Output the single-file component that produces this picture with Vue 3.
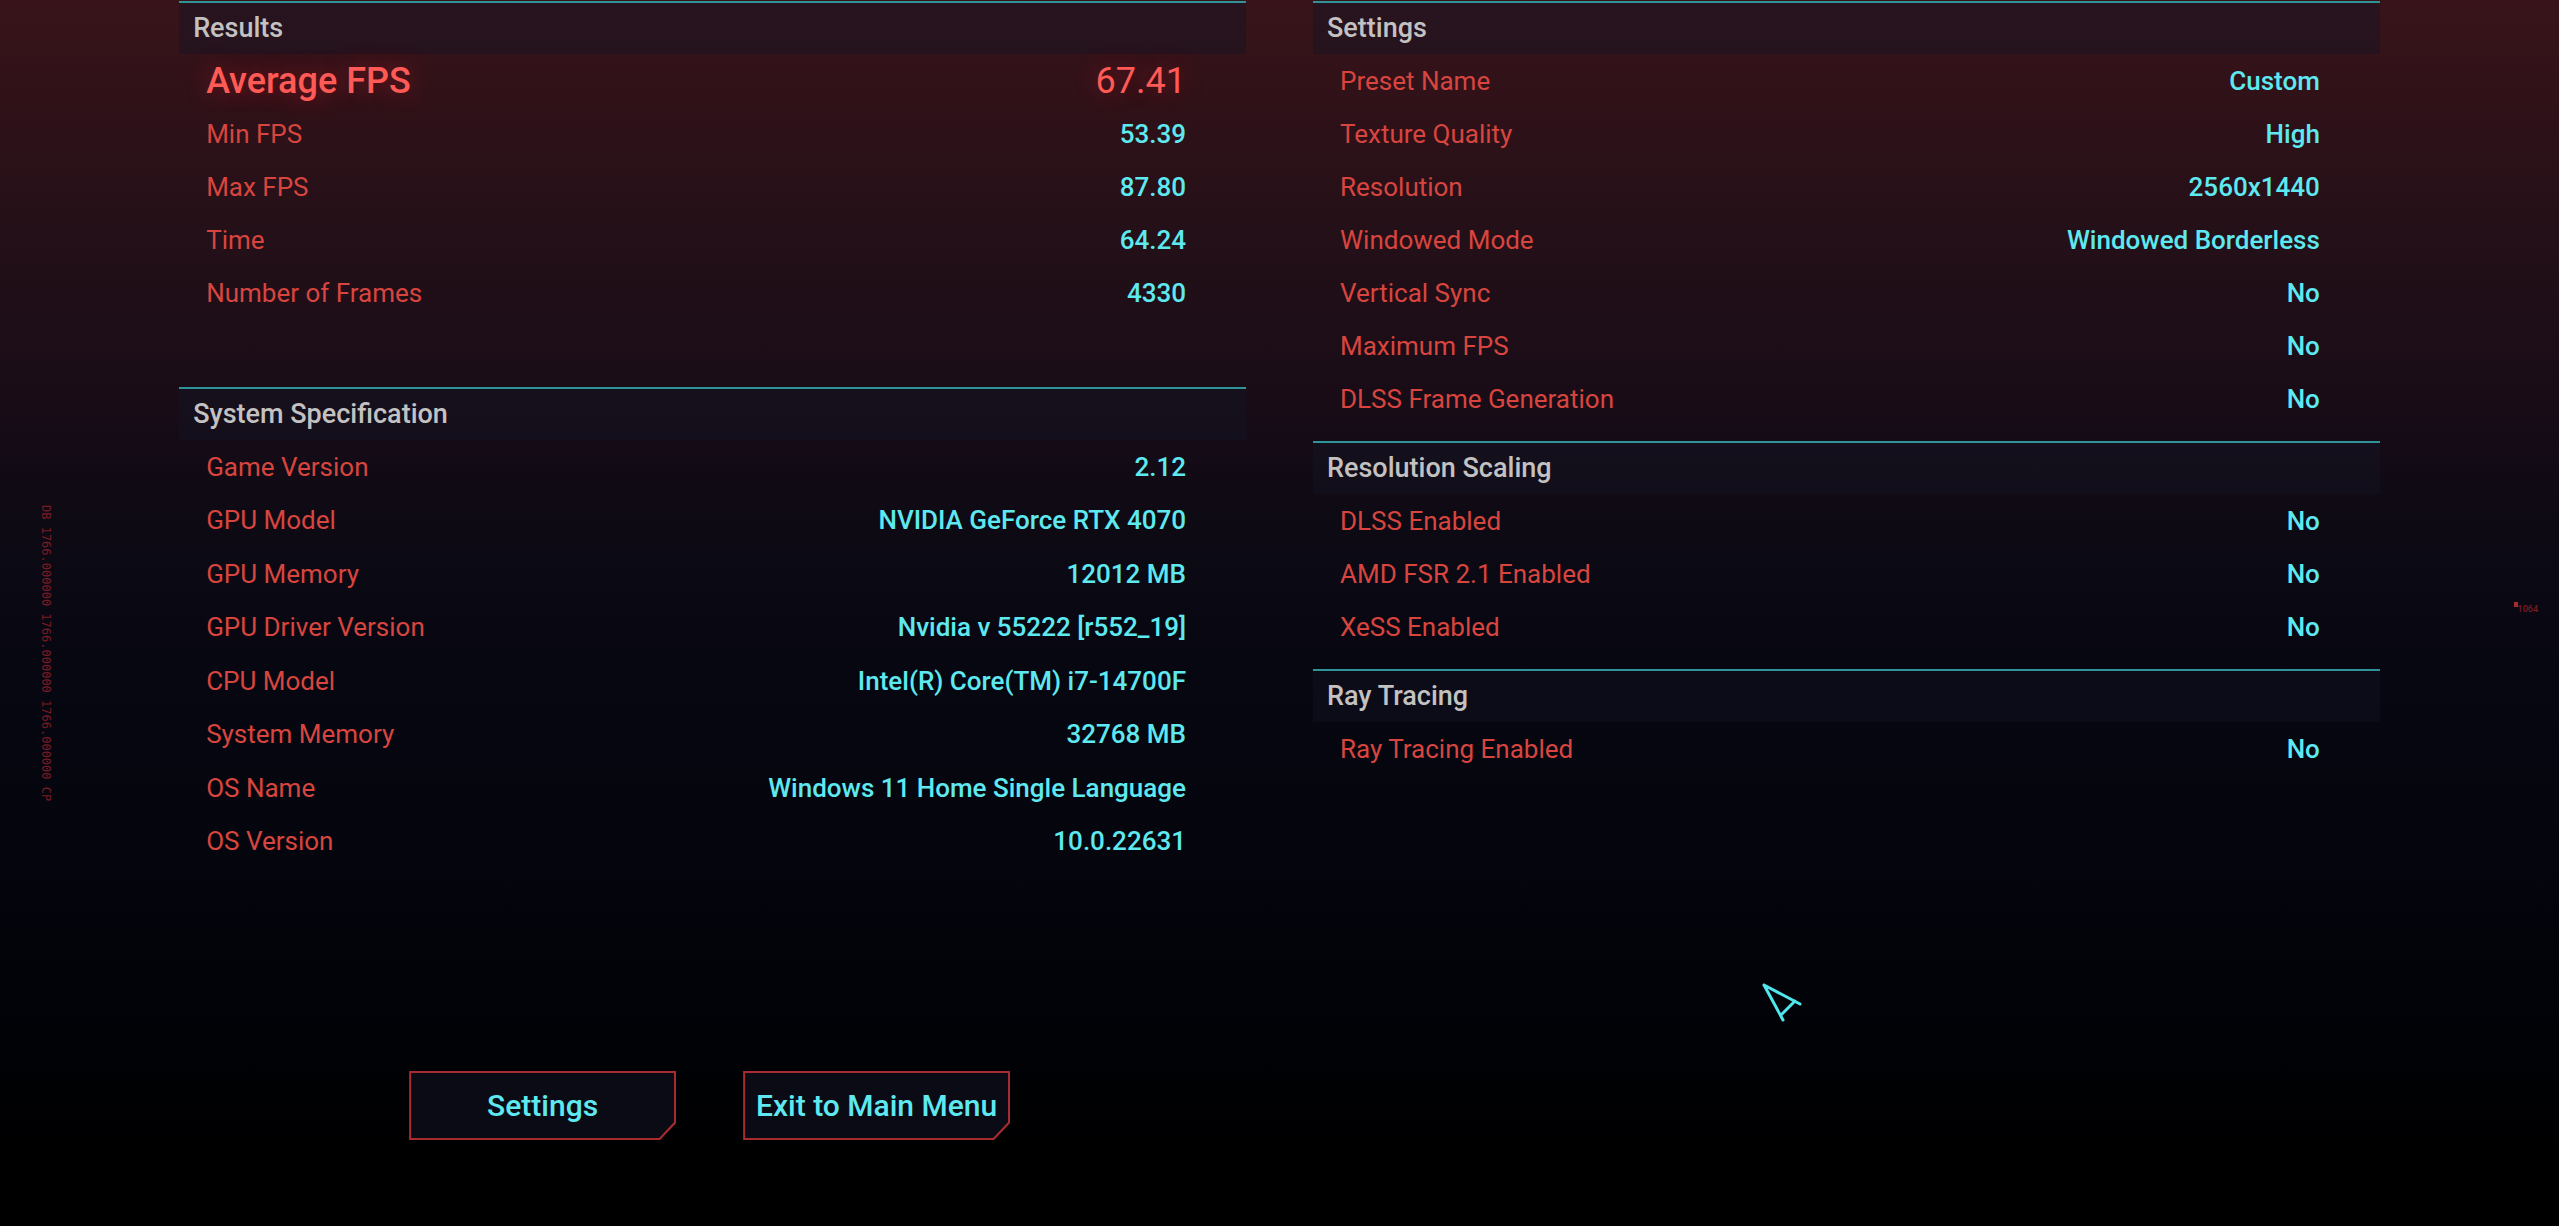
<script setup>
const columns = [
  {
    id: 'benchmark',
    sections: [
      {
        title: 'Results',
        kind: 'results',
        rows: [
          { label: 'Average FPS', value: '67.41', highlight: true },
          { label: 'Min FPS', value: '53.39' },
          { label: 'Max FPS', value: '87.80' },
          { label: 'Time', value: '64.24' },
          { label: 'Number of Frames', value: '4330' },
        ],
      },
      {
        title: 'System Specification',
        kind: 'system',
        rows: [
          { label: 'Game Version', value: '2.12' },
          { label: 'GPU Model', value: 'NVIDIA GeForce RTX 4070' },
          { label: 'GPU Memory', value: '12012 MB' },
          { label: 'GPU Driver Version', value: 'Nvidia v 55222 [r552_19]' },
          { label: 'CPU Model', value: 'Intel(R) Core(TM) i7-14700F' },
          { label: 'System Memory', value: '32768 MB' },
          { label: 'OS Name', value: 'Windows 11 Home Single Language' },
          { label: 'OS Version', value: '10.0.22631' },
        ],
      },
    ],
    actions: ['Settings', 'Exit to Main Menu'],
  },
  {
    id: 'options',
    sections: [
      {
        title: 'Settings',
        kind: 'settings',
        rows: [
          { label: 'Preset Name', value: 'Custom' },
          { label: 'Texture Quality', value: 'High' },
          { label: 'Resolution', value: '2560x1440' },
          { label: 'Windowed Mode', value: 'Windowed Borderless' },
          { label: 'Vertical Sync', value: 'No' },
          { label: 'Maximum FPS', value: 'No' },
          { label: 'DLSS Frame Generation', value: 'No' },
        ],
      },
      {
        title: 'Resolution Scaling',
        kind: 'scaling',
        rows: [
          { label: 'DLSS Enabled', value: 'No' },
          { label: 'AMD FSR 2.1 Enabled', value: 'No' },
          { label: 'XeSS Enabled', value: 'No' },
        ],
      },
      {
        title: 'Ray Tracing',
        kind: 'tracing',
        rows: [{ label: 'Ray Tracing Enabled', value: 'No' }],
      },
    ],
    actions: [],
  },
]
</script>

<template>
  <main class="screen">
    <div v-for="column in columns" :key="column.id" class="column">
      <section
        v-for="section in column.sections"
        :key="section.title"
        class="section"
        :class="section.kind"
      >
        <h2 :id="section.kind" class="title">{{ section.title }}</h2>
        <table class="stats" :aria-labelledby="section.kind">
          <tbody>
            <tr v-for="row in section.rows" :key="row.label" :class="{ highlight: row.highlight }">
              <th scope="row">{{ row.label }}</th>
              <td>{{ row.value }}</td>
            </tr>
          </tbody>
        </table>
      </section>
      <div v-if="column.actions.length" class="actions">
        <button v-for="action in column.actions" :key="action" type="button" class="action">
          <span>{{ action }}</span>
        </button>
      </div>
    </div>

    <span class="readout">DB 1766.000000 1766.000000 1766.000000 CP</span>
    <span class="marker"><i></i>1064</span>
    <svg class="pointer" viewBox="0 0 44 44" aria-hidden="true">
      <path d="M3 4 39 23M3 4 22 39M34 20 21 33" />
    </svg>
  </main>
</template>

<style>
body {
  margin: 0;
  background: #000;
}
</style>

<style scoped>
.screen {
  position: relative;
  box-sizing: border-box;
  min-height: 100vh;
  padding: 1px 7% 0;
  display: flex;
  gap: 67px;
  overflow: hidden;
  background: linear-gradient(
    #38141a 0%,
    #2e1118 10%,
    #241018 19%,
    #190c17 32%,
    #0d0a14 43%,
    #070711 55%,
    #04050d 70%,
    #010206 85%,
    #000 95%
  );
  color: #5ee9f0;
  font-family: Roboto, "Liberation Sans", sans-serif;
  font-size: 26px;
  font-weight: 500;
}

.column {
  flex: 1;
  min-width: 0;
}

.section {
  margin-bottom: 16px;
}

.results {
  margin-bottom: 68px;
}

.title {
  box-sizing: border-box;
  height: 53px;
  margin: 0;
  padding-left: 14px;
  border-top: 2px solid #2f9498;
  background: rgba(20, 20, 36, 0.45);
  color: #c4c1c1;
  font-size: 27px;
  font-weight: 500;
  line-height: 51px;
}

.stats {
  width: 100%;
  border-collapse: collapse;
}

.system .stats {
  height: 428px;
}

.stats th,
.stats td {
  height: 53px;
  padding: 0;
  line-height: 32px;
  white-space: nowrap;
}

.stats th {
  padding-left: 27px;
  color: #d8453f;
  font-weight: 400;
  text-align: left;
}

.stats td {
  padding-right: 60px;
  text-align: right;
}

.highlight th,
.highlight td {
  color: #ff5a55;
  font-size: 36px;
  text-shadow: 0 0 24px rgba(255, 30, 40, 0.4);
}

.highlight th {
  font-weight: 500;
}

.highlight td {
  font-weight: 400;
}

.actions {
  display: flex;
  gap: 67px;
  margin: 203px 0 0 230px;
}

.action {
  position: relative;
  width: 267px;
  height: 69px;
  padding: 0;
  border: 0;
  background: #a82c2f;
  clip-path: polygon(0 0, 100% 0, 100% calc(100% - 17px), calc(100% - 16px) 100%, 0 100%);
  color: #5ee9f0;
  font: inherit;
  font-size: 30px;
  white-space: nowrap;
}

.action::before {
  content: "";
  position: absolute;
  inset: 2px;
  background: #0b0b16;
  clip-path: polygon(0 0, 100% 0, 100% calc(100% - 16px), calc(100% - 15px) 100%, 0 100%);
}

.action span {
  position: relative;
}

.readout {
  position: absolute;
  top: 505px;
  left: 39px;
  color: #7a1c24;
  font: 12px/14px "DejaVu Sans Mono", monospace;
  white-space: nowrap;
  writing-mode: vertical-rl;
}

.marker {
  position: absolute;
  top: 602px;
  right: 21px;
  display: flex;
  color: #7a1c24;
  font-size: 9px;
  line-height: 14px;
}

.marker i {
  width: 4px;
  height: 5px;
  background: #a82c2f;
}

.pointer {
  position: absolute;
  top: 981px;
  left: 1761px;
  width: 44px;
  height: 44px;
  fill: none;
  stroke: #4fe6ee;
  stroke-width: 3;
  stroke-linecap: round;
}
</style>
